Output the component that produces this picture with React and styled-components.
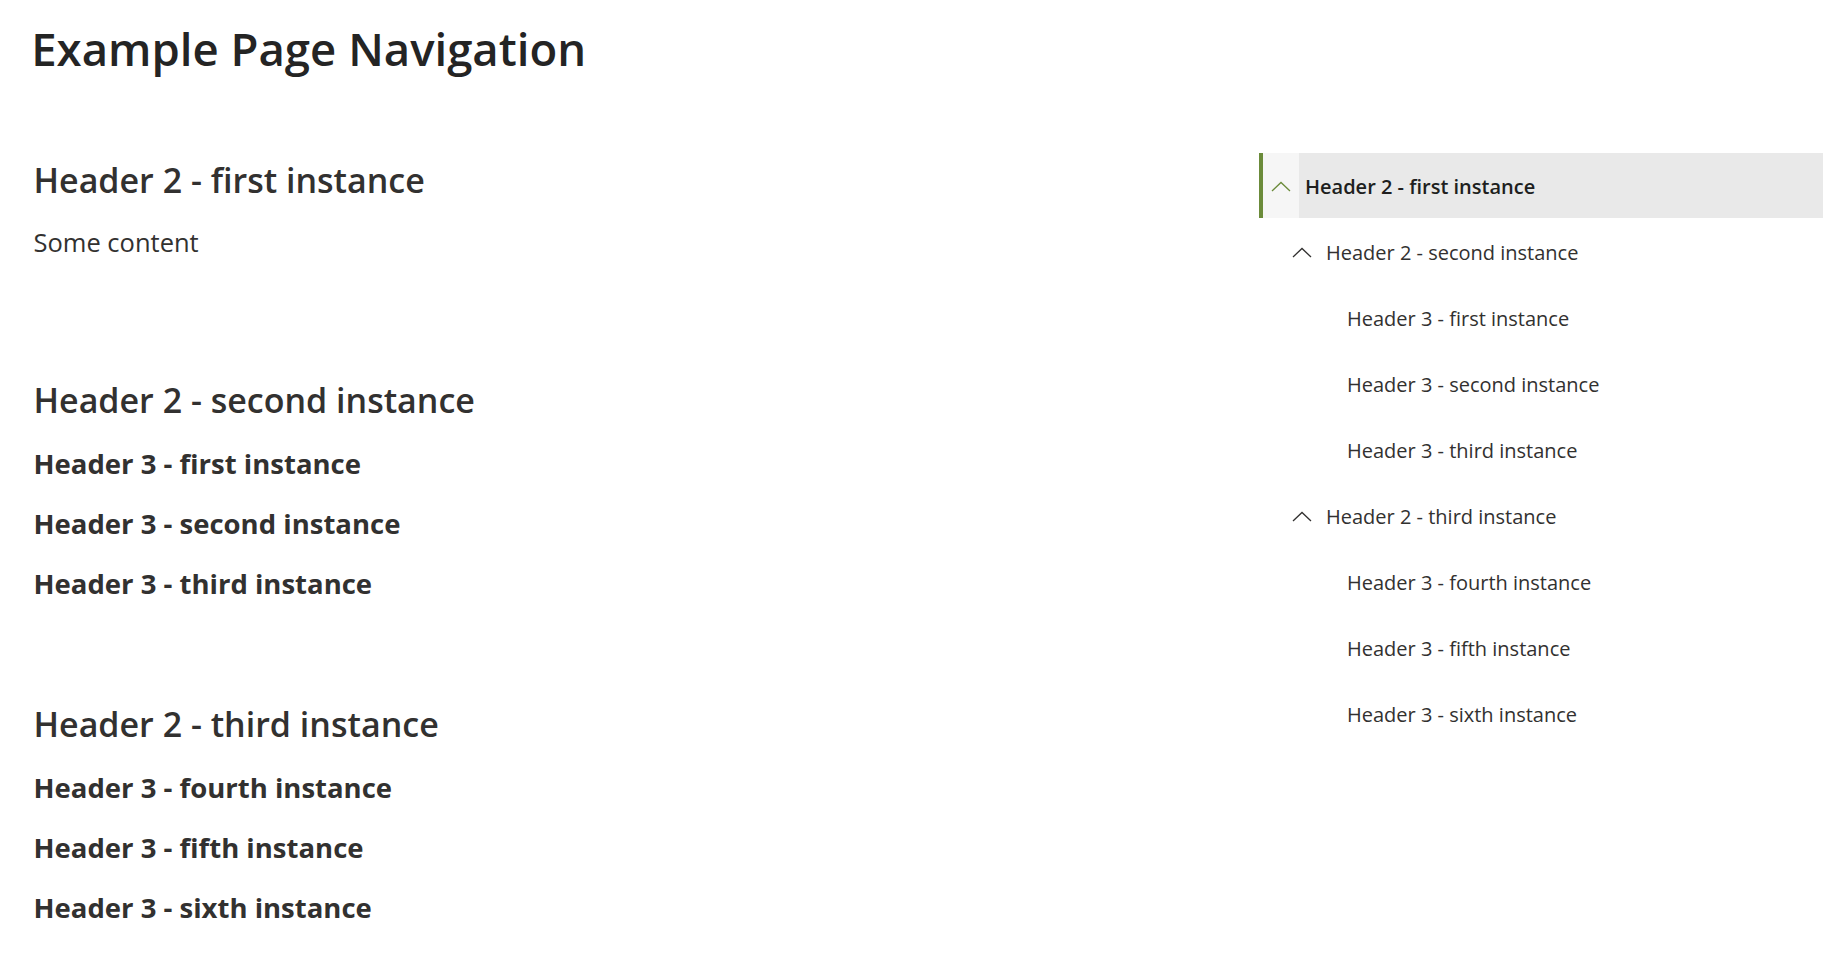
import React from "react";
import styled, { createGlobalStyle } from "styled-components";

const GlobalStyle = createGlobalStyle`
  body {
    margin: 0;
    background: #ffffff;
    font-family: "Open Sans", "Noto Sans", sans-serif;
    color: #323130;
  }
`;

const sections = [
  { id: "h2-1", title: "Header 2 - first instance", body: "Some content", subs: [] },
  {
    id: "h2-2",
    title: "Header 2 - second instance",
    subs: ["Header 3 - first instance", "Header 3 - second instance", "Header 3 - third instance"],
  },
  {
    id: "h2-3",
    title: "Header 2 - third instance",
    subs: ["Header 3 - fourth instance", "Header 3 - fifth instance", "Header 3 - sixth instance"],
  },
];

const navItems = [
  { label: "Header 2 - first instance", depth: 0, chevron: true, active: true },
  { label: "Header 2 - second instance", depth: 1, chevron: true },
  { label: "Header 3 - first instance", depth: 2 },
  { label: "Header 3 - second instance", depth: 2 },
  { label: "Header 3 - third instance", depth: 2 },
  { label: "Header 2 - third instance", depth: 1, chevron: true },
  { label: "Header 3 - fourth instance", depth: 2 },
  { label: "Header 3 - fifth instance", depth: 2 },
  { label: "Header 3 - sixth instance", depth: 2 },
];

const ChevronUp = ({ color }) => (
  <svg width="20" height="11" viewBox="0 0 20 11" fill="none">
    <polyline points="1,10 10,1.5 19,10" stroke={color} strokeWidth="1.3" />
  </svg>
);

const App = () => {
  return (
    <Page>
      <GlobalStyle />
      <Main>
        <Title>Example Page Navigation</Title>
        <Sections>
          {sections.map((s) => (
            <Section key={s.id}>
              <H2>{s.title}</H2>
              {s.body && <Content>{s.body}</Content>}
              {s.subs.map((h) => (
                <H3 key={h}>{h}</H3>
              ))}
            </Section>
          ))}
        </Sections>
      </Main>
      <Nav>
        {navItems.map((item) => (
          <NavRow key={item.label} $active={item.active}>
            <Indent $depth={item.depth} />
            <ChevronBox $active={item.active}>
              {item.chevron && <ChevronUp color={item.active ? "#6b8b3a" : "#323130"} />}
            </ChevronBox>
            <NavLabel $active={item.active}>{item.label}</NavLabel>
          </NavRow>
        ))}
      </Nav>
    </Page>
  );
};

const Page = styled.div`
  display: flex;
  align-items: flex-start;
  padding: 18px 19px 40px 0;
  min-height: 100vh;
  box-sizing: border-box;
`;

const Main = styled.main`
  flex: 1;
  padding-left: 33.5px;
`;

const Title = styled.h1`
  margin: 0 0 79px -2.3px;
  font-size: 45.5px;
  line-height: 60px;
  font-weight: 600;
  color: #242424;
`;

const Sections = styled.div`
  display: flex;
  flex-direction: column;
  gap: 97.5px;
`;

const Section = styled.section`
  display: flex;
  flex-direction: column;
  gap: 22px;
`;

const H2 = styled.h2`
  margin: 0;
  font-size: 34px;
  line-height: 46px;
  font-weight: 600;
  color: #323130;
`;

const H3 = styled.h3`
  margin: 0;
  font-size: 27.5px;
  line-height: 38px;
  font-weight: 700;
  color: #323130;
`;

const Content = styled.p`
  margin: 1px 0 21.5px;
  font-size: 25.5px;
  line-height: 32px;
  color: #323130;
`;

const Nav = styled.nav`
  width: 564px;
  margin-top: 135px;
  display: flex;
  flex-direction: column;
  gap: 1px;
`;

const NavRow = styled.div`
  display: flex;
  align-items: stretch;
  height: 65px;
  background: ${({ $active }) => ($active ? "#e9e9e9" : "transparent")};
  border-left: 4px solid ${({ $active }) => ($active ? "#6b8b3a" : "transparent")};
  box-sizing: border-box;
`;

const Indent = styled.span`
  flex: 0 0 ${({ $depth }) => $depth * 21}px;
`;

const ChevronBox = styled.span`
  flex: 0 0 36px;
  display: flex;
  align-items: center;
  justify-content: center;
  padding-top: 2px;
  box-sizing: border-box;
  background: ${({ $active }) => ($active ? "#f6f6f6" : "transparent")};
`;

const NavLabel = styled.span`
  display: flex;
  align-items: center;
  padding: 1px 0 0 6px;
  font-size: 20px;
  font-weight: ${({ $active }) => ($active ? 600 : 400)};
  color: ${({ $active }) => ($active ? "#201f1e" : "#323130")};
  white-space: nowrap;
`;

export default App;
